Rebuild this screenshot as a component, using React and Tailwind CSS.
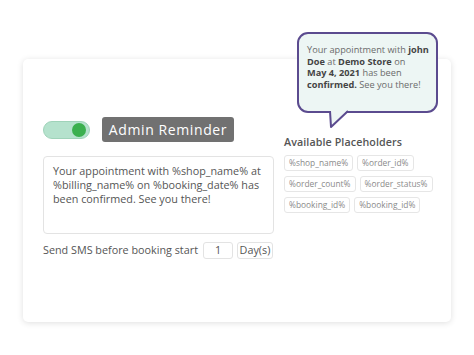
export default function App() {
  const chips = [
    ["%shop_name%", "%order_id%"],
    ["%order_count%", "%order_status%"],
    ["%booking_id%", "%booking_id%"],
  ];
  return (
    <div className="relative w-[474px] h-[355px] bg-white overflow-hidden" style={{ fontFamily: '"Open Sans", sans-serif' }}>
      <div className="absolute left-[23px] top-[59px] w-[428px] h-[263px] bg-white rounded-[5px] shadow-[0_1px_6px_rgba(0,0,0,0.13)]">
        <div className="flex pl-[20px] pt-[58px]">
          <div className="w-[231px] flex flex-col">
            <div className="flex items-center h-[25px]">
              <div className="w-[47px] h-[18px] rounded-full bg-[#b5e2cd] border border-[#9fd3b9] flex items-center justify-end pr-[3px]">
                <div className="w-[14px] h-[14px] rounded-full bg-[#3bb04f]" />
              </div>
              <div className="ml-[12px] h-[25px] w-[132px] bg-[#717171] rounded-[3px] flex items-center justify-center text-white text-[14px] tracking-[0.6px]">
                Admin Reminder
              </div>
            </div>
            <div className="mt-[14px] h-[78px] border border-[#e3e3e3] rounded-[4px] px-[9px] pt-[7px] text-[10.8px] leading-[14px] text-[#555]">
              Your appointment with %shop_name% at %billing_name% on %booking_date% has been confirmed. See you there!
            </div>
            <div className="mt-[8px] flex items-center text-[10.8px] text-[#555] whitespace-nowrap">
              <span>Send SMS before booking start</span>
              <div className="ml-[5px] w-[30px] h-[17px] border border-[#e3e3e3] rounded-[3px] flex items-center justify-center">1</div>
              <div className="ml-[4px] w-[36px] h-[17px] border border-[#e3e3e3] rounded-[3px] flex items-center justify-center">Day(s)</div>
            </div>
          </div>
          <div className="ml-[10px] mt-[17px] flex flex-col">
            <div className="text-[10.7px] font-semibold text-[#555] leading-[16px] tracking-[0.1px]">Available Placeholders</div>
            <div className="mt-[5px] flex flex-col gap-[5px]">
              {chips.map((row, i) => (
                <div key={i} className="flex gap-[4px]">
                  {row.map((c, j) => (
                    <div key={j} className="h-[16px] px-[4px] border border-[#e6e6e6] rounded-[3px] text-[8.4px] text-[#8a8a8a] flex items-center">
                      {c}
                    </div>
                  ))}
                </div>
              ))}
            </div>
          </div>
        </div>
      </div>
      <div className="absolute left-[297px] top-[32px] w-[141px] h-[81px] bg-[#edf6f4] border-2 border-[#5b4b8f] rounded-[11px] pl-[8px] pt-[10px] text-[9.2px] leading-[11.5px] text-[#6b6b6b] whitespace-nowrap">
        <div>Your appointment with <b className="text-[#444]">john</b></div>
        <div><b className="text-[#444]">Doe</b> at <b className="text-[#444]">Demo Store</b> on</div>
        <div><b className="text-[#444]">May 4, 2021</b> has been</div>
        <div><b className="text-[#444]">confirmed.</b> See you there!</div>
      </div>
      <svg className="absolute left-[328px] top-[110px]" width="24" height="20" viewBox="0 0 24 20">
        <path d="M2 0 L3 17 L20 0 Z" fill="#edf6f4" />
        <path d="M2 1 L3 17 L20 1" fill="none" stroke="#5b4b8f" strokeWidth="2" strokeLinejoin="round" />
      </svg>
    </div>
  );
}
